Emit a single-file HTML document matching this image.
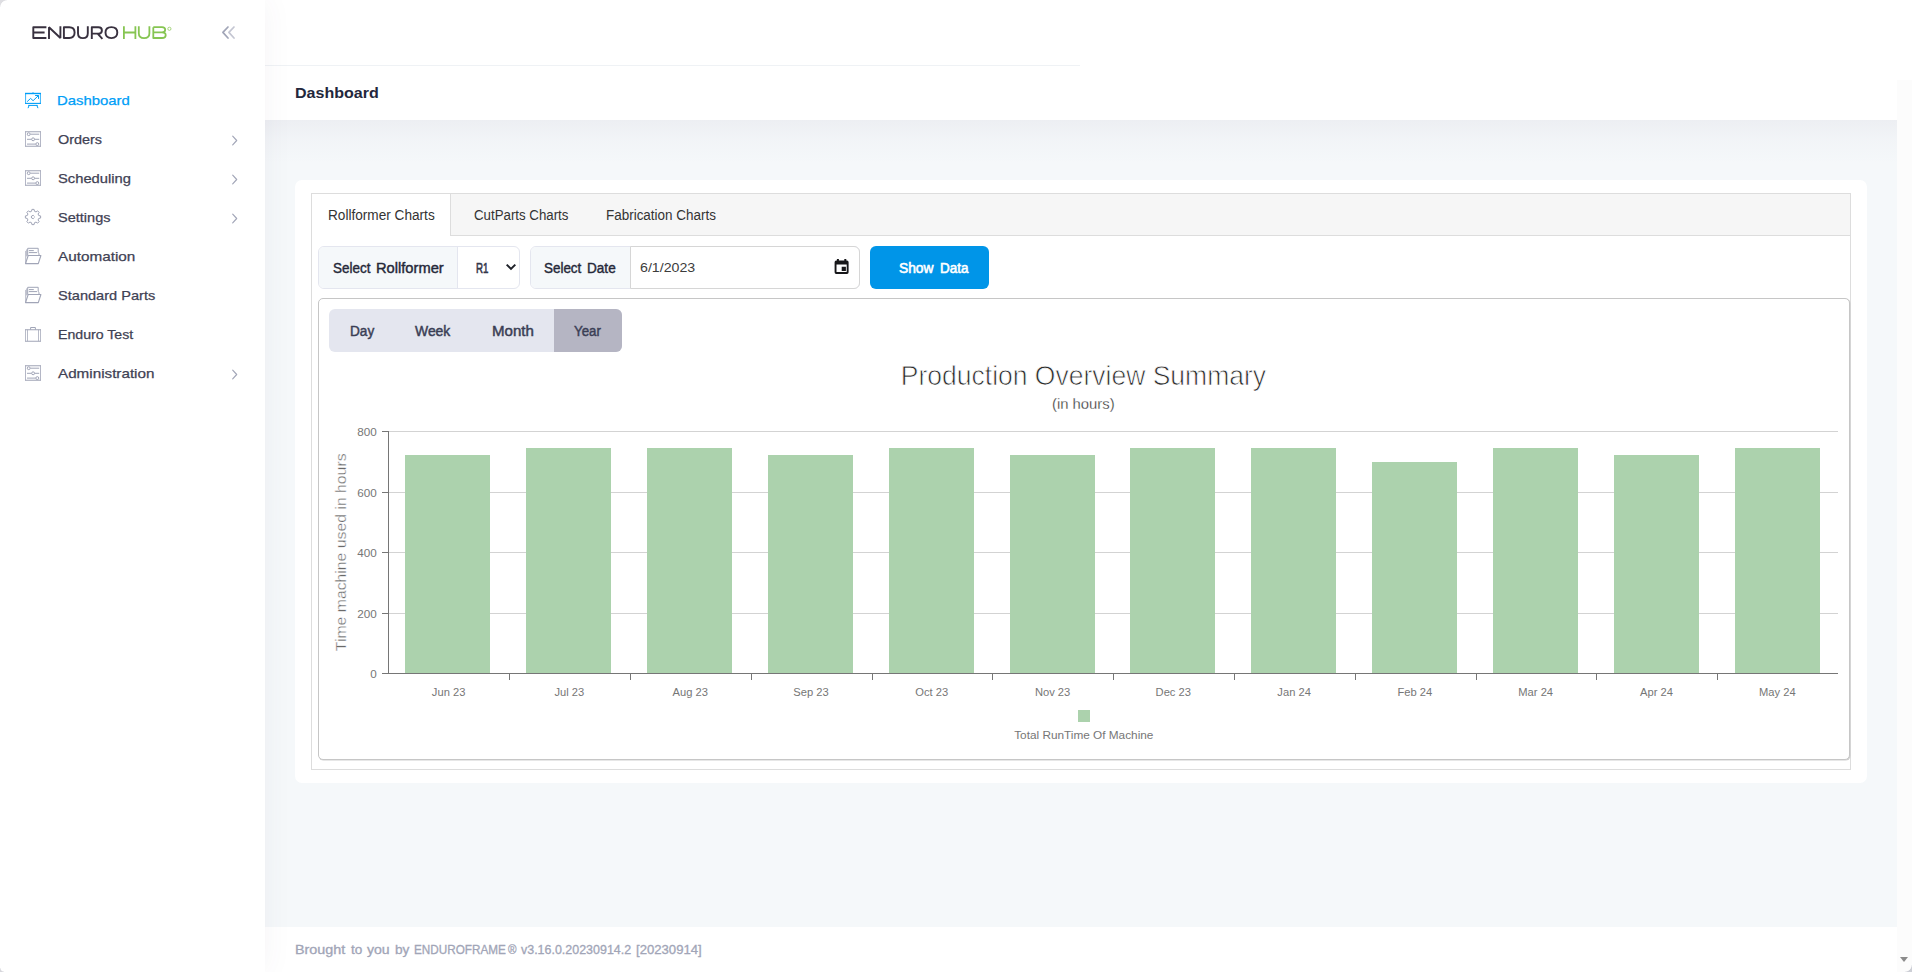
<!DOCTYPE html>
<html lang="en">
<head>
<meta charset="utf-8">
<title>Dashboard</title>
<style>
*{box-sizing:border-box;margin:0;padding:0}
html,body{width:1912px;height:972px;overflow:hidden;background:#f5f8fa;font-family:"Liberation Sans",sans-serif}
body{position:relative}
.abs{position:absolute}
.tx{position:absolute;height:30px;line-height:30px;white-space:nowrap;transform-origin:0 0;z-index:7}
/* sidebar */
#aside{position:absolute;left:0;top:0;width:265px;height:972px;background:#fff;box-shadow:0 0 28px 0 rgba(82,63,105,.06);z-index:5}
.mi{position:absolute;left:0;width:265px;height:39px}
.mi svg.ic{position:absolute;left:24px;top:11px;width:18px;height:18px;overflow:visible}
.mi svg.ch{position:absolute;left:230px;top:15.5px;width:9px;height:11px;overflow:visible}
/* header */
#header{position:absolute;left:265px;top:0;width:1647px;height:120px;background:#fff;z-index:3}
#hline{position:absolute;left:265px;top:65px;width:815px;height:1px;background:#eff2f5;z-index:4}
#hshadow{position:absolute;left:265px;top:120px;width:1632px;height:44px;background:linear-gradient(180deg,rgba(82,63,105,.05) 0%,rgba(82,63,105,.018) 45%,rgba(82,63,105,0) 100%);z-index:2}
/* card */
#card{position:absolute;left:295px;top:180px;width:1572px;height:603px;background:#fff;border-radius:7px;z-index:1}
#tabs{position:absolute;left:311px;top:193px;width:1540px;height:577px;border:1px solid #ddd;background:#fff;z-index:2}
#tabhead{position:absolute;left:0;top:0;width:1538px;height:42px;background:#f6f6f6;border-bottom:1px solid #ddd}
#tabon{position:absolute;left:0;top:0;width:138px;height:43px;background:#fff}
#tabon i{position:absolute;left:138px;top:0;width:1px;height:42px;background:#ddd}
/* input groups */
.ig{position:absolute;top:246px;height:43px;border:1px solid #e4e6ef;border-radius:6px;background:#fff;z-index:3;overflow:hidden}
.ig .lab{position:absolute;left:0;top:0;height:41px;background:#f5f8fa;border-right:1px solid #e4e6ef}
#dateinp{position:absolute;left:630px;top:246px;width:230px;height:43px;border:1px solid #d6d6d6;border-radius:0 6px 6px 0;background:#fff;z-index:4}
#btn{position:absolute;left:870px;top:246px;width:119px;height:43px;border-radius:6px;background:#0095e8;z-index:3}
/* chart panel */
#panel{position:absolute;left:318px;top:298px;width:1532px;height:462px;border:1px solid #c6c6c6;border-radius:5px;background:#fff;z-index:3;box-shadow:.6px .6px 0 0 #d0d0d0}
#bg{position:absolute;left:329px;top:309px;width:293px;height:43px;border-radius:6px;background:#e4e6ef;z-index:4;overflow:hidden}
#bg i{position:absolute;left:225px;top:0;width:68px;height:43px;background:#b5b5c3}
#chart{position:absolute;left:318px;top:298px;width:1532px;height:462px;z-index:5}
#chart text{font-family:"Liberation Sans",sans-serif}
/* footer */
#footer{position:absolute;left:265px;top:927px;width:1647px;height:45px;background:#fff;z-index:2}
/* window corners */
.cnr{position:absolute;z-index:20}
#c1{left:0;top:0;width:7px;height:7px;background:radial-gradient(circle at 7px 7px,rgba(222,222,226,0) 6.300px,#dedee2 7.100px)}
#c2{right:0;bottom:0;width:7px;height:7px;background:radial-gradient(circle at 0 0,rgba(205,207,214,0) 6.300px,#cdcfd6 7.100px)}
#c3{left:0;bottom:0;width:4px;height:4px;background:radial-gradient(circle at 4px 0,rgba(215,215,220,0) 3.2px,#d7d7dc 4px)}
/* scrollbar */
#sb{position:absolute;left:1897px;top:80px;width:15px;height:892px;background:#fcfcfc;z-index:6}
#sb i{position:absolute;left:3px;bottom:10px;width:0;height:0;border-left:4.500px solid transparent;border-right:4.500px solid transparent;border-top:5px solid #8b8b8b}
</style>
</head>
<body>

<!-- SIDEBAR -->
<div id="aside">
<svg class="abs" style="left:28px;top:20px" width="150" height="25" viewBox="28 20 150 25" fill="none" stroke-linecap="butt" stroke-linejoin="round">
<g stroke="#38313f" stroke-width="1.900">
<path d="M46.400 27.200H33.300V38H46.400M33.300 32.500H44.600"/>
<path d="M49 38.900V27.200L60.400 38V26.300" stroke-linejoin="bevel"/>
<path d="M63.900 27.200H69.200Q74.600 27.200 74.600 32.600Q74.600 38 69.200 38H63.900Z"/>
<path d="M78 26.300V33.200Q78 38.100 82.900 38.100Q87.800 38.100 87.800 33.200V26.300"/>
<path d="M91.800 38.900V27.200H98.400Q101.900 27.200 101.900 30.400Q101.900 33.600 98.400 33.600H91.800M97.600 33.600L102.400 38.900"/>
<path d="M111.400 27.100Q117.300 27.100 117.300 32.600Q117.300 38.100 111.400 38.100Q105.500 38.100 105.500 32.600Q105.500 27.100 111.400 27.100Z"/>
</g>
<g stroke="#86c552" stroke-width="1.800">
<path d="M123.900 26.300V38.900M135.400 26.300V38.900M123.900 32.500H135.400"/>
<path d="M138.800 26.300V33.200Q138.800 38.100 144.100 38.100Q149.400 38.100 149.400 33.200V26.300"/>
<path d="M153.300 27.200H162Q165.200 27.200 165.200 29.800Q165.200 32.400 162 32.400H153.300M162 32.400Q165.700 32.400 165.700 35.200Q165.700 38 162 38H153.300V27.200"/>
<circle cx="169.400" cy="28.800" r="1.600" stroke-width=".7"/>
</g>
</svg>
<svg class="abs" style="left:220px;top:24px" width="18" height="18" viewBox="220 24 18 18" fill="none" stroke-width="1.700" stroke-linecap="round" stroke-linejoin="round">
<path d="M228 27L222.900 32.400L228 38" stroke="#a1a5b7"/>
<path d="M234 27L228.900 32.400L234 38" stroke="#c4c6d2"/>
</svg>
<div class="mi" style="top:80px"><svg class="ic" viewBox="0 0 18 18" fill="none" stroke="#009ef7" stroke-width="1" stroke-linejoin="round">
<path d="M9 1.300V2.200"/><path d="M1 2.500H17" stroke-width="1.400"/><path d="M1.600 2.700V12.200M16.400 2.700V12.200" stroke-width=".8"/>
<path d="M3.400 10.400L6.600 7.400L9.100 9.700L14.300 4.700M11.500 4.500H14.500V7.500" stroke-linecap="round"/><path d="M1 12.400H17" stroke-width="1.100"/><path d="M4.700 14.400H13.200M5.100 14.400L4.200 16.800M12.900 14.400L13.800 16.800" stroke-linecap="round"/></svg></div>
<div class="mi" style="top:119px"><svg class="ic" viewBox="0 0 18 18" fill="none" stroke="#a1a5b7" stroke-width="1">
<path d="M1 1.700H17M1 16.300H17" stroke-width="1.100"/><path d="M1.500 1.700V16.300M16.500 1.700V16.300" stroke-width=".8"/>
<circle cx="4.700" cy="4.200" r="1.450"/><path d="M6.300 4.200H15.200"/>
<circle cx="9.100" cy="9.300" r="1.450"/><path d="M3 9.300H7.500M10.700 9.300H15.200"/>
<circle cx="13.300" cy="14.100" r="1.450"/><path d="M3 14.100H11.700"/></svg><svg class="ch" viewBox="0 0 9 11" fill="none" stroke="#a1a5b7" stroke-width="1.150" stroke-linecap="round" stroke-linejoin="round"><path d="M2.700 1.200L6.700 5.500L2.700 9.800"/></svg></div>
<div class="mi" style="top:158px"><svg class="ic" viewBox="0 0 18 18" fill="none" stroke="#a1a5b7" stroke-width="1">
<path d="M1 1.700H17M1 16.300H17" stroke-width="1.100"/><path d="M1.500 1.700V16.300M16.500 1.700V16.300" stroke-width=".8"/>
<circle cx="4.700" cy="4.200" r="1.450"/><path d="M6.300 4.200H15.200"/>
<circle cx="9.100" cy="9.300" r="1.450"/><path d="M3 9.300H7.500M10.700 9.300H15.200"/>
<circle cx="13.300" cy="14.100" r="1.450"/><path d="M3 14.100H11.700"/></svg><svg class="ch" viewBox="0 0 9 11" fill="none" stroke="#a1a5b7" stroke-width="1.150" stroke-linecap="round" stroke-linejoin="round"><path d="M2.700 1.200L6.700 5.500L2.700 9.800"/></svg></div>
<div class="mi" style="top:197px"><svg class="ic" viewBox="0 0 18 18" fill="none" stroke="#a1a5b7" stroke-width="1" stroke-linejoin="round"><path d="M7.93 1.38L10.07 1.38L10.46 3.28L12.01 3.93L13.63 2.85L15.15 4.37L14.07 5.99L14.72 7.54L16.62 7.93L16.62 10.07L14.72 10.46L14.07 12.01L15.15 13.63L13.63 15.15L12.01 14.07L10.46 14.72L10.07 16.62L7.93 16.62L7.54 14.72L5.99 14.07L4.37 15.15L2.85 13.63L3.93 12.01L3.28 10.46L1.38 10.07L1.38 7.93L3.28 7.54L3.93 5.99L2.85 4.37L4.37 2.85L5.99 3.93L7.54 3.28Z"/><path d="M10.300 8.200A1.600 1.600 0 1 0 10.300 9.800" stroke-linecap="round"/></svg><svg class="ch" viewBox="0 0 9 11" fill="none" stroke="#a1a5b7" stroke-width="1.150" stroke-linecap="round" stroke-linejoin="round"><path d="M2.700 1.200L6.700 5.500L2.700 9.800"/></svg></div>
<div class="mi" style="top:236px"><svg class="ic" viewBox="0 0 18 18" fill="none" stroke="#a1a5b7" stroke-width="1" stroke-linejoin="round" stroke-linecap="round">
<path d="M3.700 8.300V1.300H14.200V5.600L15 6.300V8.300"/><path d="M2.700 2.800V9M1.700 4.300V16.400" stroke-width=".8"/>
<path d="M5.300 3.600H9.400M5.300 5.600H12.600"/>
<path d="M4.200 8.500H16.900L14.300 16.600H1.500Z" stroke-width="1.100"/></svg></div>
<div class="mi" style="top:275px"><svg class="ic" viewBox="0 0 18 18" fill="none" stroke="#a1a5b7" stroke-width="1" stroke-linejoin="round" stroke-linecap="round">
<path d="M3.700 8.300V1.300H14.200V5.600L15 6.300V8.300"/><path d="M2.700 2.800V9M1.700 4.300V16.400" stroke-width=".8"/>
<path d="M5.300 3.600H9.400M5.300 5.600H12.600"/>
<path d="M4.200 8.500H16.900L14.300 16.600H1.500Z" stroke-width="1.100"/></svg></div>
<div class="mi" style="top:314px"><svg class="ic" viewBox="0 0 18 18" fill="none" stroke="#a1a5b7" stroke-width="1" stroke-linejoin="round">
<path d="M1 4.700H17M1 16.200H17" stroke-width="1.100"/><path d="M1.500 4.700V16.200M16.500 4.700V16.200" stroke-width=".75"/><path d="M6.600 4.700V2.500H11.400V4.700"/><path d="M3.500 4.700V16.200M14.500 4.700V16.200" stroke-width=".75"/></svg></div>
<div class="mi" style="top:353px"><svg class="ic" viewBox="0 0 18 18" fill="none" stroke="#a1a5b7" stroke-width="1">
<path d="M1 1.700H17M1 16.300H17" stroke-width="1.100"/><path d="M1.500 1.700V16.300M16.500 1.700V16.300" stroke-width=".8"/>
<circle cx="4.700" cy="4.200" r="1.450"/><path d="M6.300 4.200H15.200"/>
<circle cx="9.100" cy="9.300" r="1.450"/><path d="M3 9.300H7.500M10.700 9.300H15.200"/>
<circle cx="13.300" cy="14.100" r="1.450"/><path d="M3 14.100H11.700"/></svg><svg class="ch" viewBox="0 0 9 11" fill="none" stroke="#a1a5b7" stroke-width="1.150" stroke-linecap="round" stroke-linejoin="round"><path d="M2.700 1.200L6.700 5.500L2.700 9.800"/></svg></div>
</div>

<!-- HEADER -->
<div id="header"></div>
<div id="hline"></div>
<div id="hshadow"></div>

<!-- CARD -->
<div id="card"></div>
<div id="tabs">
  <div id="tabhead"><div id="tabon"><i></i></div></div>
</div>

<div class="ig" style="left:318px;width:202px"><div class="lab" style="width:139px"></div></div>
<svg class="abs" style="left:505px;top:262px;z-index:8" width="12" height="10" viewBox="0 0 12 10" fill="none" stroke="#1e2129" stroke-width="2"><path d="M1.700 2.600L6 6.900L10.300 2.600"/></svg>
<div class="ig" style="left:530px;width:330px"><div class="lab" style="width:101px"></div></div>
<div id="dateinp"></div>
<svg class="abs" style="left:834px;top:258px;z-index:8" width="16" height="17" viewBox="0 0 16 17" fill="#17171a"><path fill-rule="evenodd" d="M2.900 1h2v1.600h5.400V1h2v1.600h.7a1.600 1.600 0 0 1 1.600 1.600v10.100a1.600 1.600 0 0 1-1.600 1.600H2.200a1.600 1.600 0 0 1-1.600-1.600V4.200a1.600 1.600 0 0 1 1.600-1.600h.7zM2.500 6.400v7.700h10.200V6.400zM7.700 8.800h4.200v4.300H7.700z"/></svg>
<div id="btn"></div>

<div id="panel"></div>
<div id="bg"><i></i></div>

<svg id="chart" width="1532" height="462" viewBox="318 298 1532 462">
<text x="1083.45" y="384.6" text-anchor="middle" font-size="27.2" fill="#2b2b2b" textLength="365.3" lengthAdjust="spacingAndGlyphs" stroke="#fff" stroke-width=".75">Production Overview Summary</text>
<text x="1083.3" y="408.6" text-anchor="middle" font-size="15.4" fill="#2b2b2b" textLength="62.6" lengthAdjust="spacingAndGlyphs" stroke="#fff" stroke-width=".3">(in hours)</text>
<path d="M382.0 673.5H388.5" stroke="#767676" stroke-width="1" shape-rendering="crispEdges"/>
<text x="376.800" y="677.8" text-anchor="end" font-size="11.700" fill="#767676">0</text>
<path d="M389.0 613.5H1838.0" stroke="#d3d3d3" stroke-width="1" shape-rendering="crispEdges"/>
<path d="M382.0 613.5H388.5" stroke="#767676" stroke-width="1" shape-rendering="crispEdges"/>
<text x="376.800" y="617.8" text-anchor="end" font-size="11.700" fill="#767676">200</text>
<path d="M389.0 552.5H1838.0" stroke="#d3d3d3" stroke-width="1" shape-rendering="crispEdges"/>
<path d="M382.0 552.5H388.5" stroke="#767676" stroke-width="1" shape-rendering="crispEdges"/>
<text x="376.800" y="556.8" text-anchor="end" font-size="11.700" fill="#767676">400</text>
<path d="M389.0 492.5H1838.0" stroke="#d3d3d3" stroke-width="1" shape-rendering="crispEdges"/>
<path d="M382.0 492.5H388.5" stroke="#767676" stroke-width="1" shape-rendering="crispEdges"/>
<text x="376.800" y="496.8" text-anchor="end" font-size="11.700" fill="#767676">600</text>
<path d="M389.0 431.5H1838.0" stroke="#d3d3d3" stroke-width="1" shape-rendering="crispEdges"/>
<path d="M382.0 431.5H388.5" stroke="#767676" stroke-width="1" shape-rendering="crispEdges"/>
<text x="376.800" y="435.8" text-anchor="end" font-size="11.700" fill="#767676">800</text>
<rect x="405" y="455" width="85" height="218" fill="#acd2ad" shape-rendering="crispEdges"/>
<text x="448.6" y="696.400" text-anchor="middle" font-size="11.700" fill="#767676" textLength="33.5" lengthAdjust="spacingAndGlyphs">Jun 23</text>
<rect x="526" y="448" width="85" height="225" fill="#acd2ad" shape-rendering="crispEdges"/>
<text x="569.4" y="696.400" text-anchor="middle" font-size="11.700" fill="#767676" textLength="29.8" lengthAdjust="spacingAndGlyphs">Jul 23</text>
<path d="M509.5 673.5V680.0" stroke="#767676" stroke-width="1" shape-rendering="crispEdges"/>
<rect x="647" y="448" width="85" height="225" fill="#acd2ad" shape-rendering="crispEdges"/>
<text x="690.2" y="696.400" text-anchor="middle" font-size="11.700" fill="#767676" textLength="35.4" lengthAdjust="spacingAndGlyphs">Aug 23</text>
<path d="M630.5 673.5V680.0" stroke="#767676" stroke-width="1" shape-rendering="crispEdges"/>
<rect x="768" y="455" width="85" height="218" fill="#acd2ad" shape-rendering="crispEdges"/>
<text x="811.0" y="696.400" text-anchor="middle" font-size="11.700" fill="#767676" textLength="35.4" lengthAdjust="spacingAndGlyphs">Sep 23</text>
<path d="M751.5 673.5V680.0" stroke="#767676" stroke-width="1" shape-rendering="crispEdges"/>
<rect x="889" y="448" width="85" height="225" fill="#acd2ad" shape-rendering="crispEdges"/>
<text x="931.8" y="696.400" text-anchor="middle" font-size="11.700" fill="#767676" textLength="32.9" lengthAdjust="spacingAndGlyphs">Oct 23</text>
<path d="M872.5 673.5V680.0" stroke="#767676" stroke-width="1" shape-rendering="crispEdges"/>
<rect x="1010" y="455" width="85" height="218" fill="#acd2ad" shape-rendering="crispEdges"/>
<text x="1052.6" y="696.400" text-anchor="middle" font-size="11.700" fill="#767676" textLength="35.4" lengthAdjust="spacingAndGlyphs">Nov 23</text>
<path d="M992.5 673.5V680.0" stroke="#767676" stroke-width="1" shape-rendering="crispEdges"/>
<rect x="1130" y="448" width="85" height="225" fill="#acd2ad" shape-rendering="crispEdges"/>
<text x="1173.3" y="696.400" text-anchor="middle" font-size="11.700" fill="#767676" textLength="35.4" lengthAdjust="spacingAndGlyphs">Dec 23</text>
<path d="M1113.5 673.5V680.0" stroke="#767676" stroke-width="1" shape-rendering="crispEdges"/>
<rect x="1251" y="448" width="85" height="225" fill="#acd2ad" shape-rendering="crispEdges"/>
<text x="1294.1" y="696.400" text-anchor="middle" font-size="11.700" fill="#767676" textLength="33.5" lengthAdjust="spacingAndGlyphs">Jan 24</text>
<path d="M1234.5 673.5V680.0" stroke="#767676" stroke-width="1" shape-rendering="crispEdges"/>
<rect x="1372" y="462" width="85" height="211" fill="#acd2ad" shape-rendering="crispEdges"/>
<text x="1414.9" y="696.400" text-anchor="middle" font-size="11.700" fill="#767676" textLength="34.8" lengthAdjust="spacingAndGlyphs">Feb 24</text>
<path d="M1355.5 673.5V680.0" stroke="#767676" stroke-width="1" shape-rendering="crispEdges"/>
<rect x="1493" y="448" width="85" height="225" fill="#acd2ad" shape-rendering="crispEdges"/>
<text x="1535.7" y="696.400" text-anchor="middle" font-size="11.700" fill="#767676" textLength="34.8" lengthAdjust="spacingAndGlyphs">Mar 24</text>
<path d="M1476.5 673.5V680.0" stroke="#767676" stroke-width="1" shape-rendering="crispEdges"/>
<rect x="1614" y="455" width="85" height="218" fill="#acd2ad" shape-rendering="crispEdges"/>
<text x="1656.5" y="696.400" text-anchor="middle" font-size="11.700" fill="#767676" textLength="32.9" lengthAdjust="spacingAndGlyphs">Apr 24</text>
<path d="M1596.5 673.5V680.0" stroke="#767676" stroke-width="1" shape-rendering="crispEdges"/>
<rect x="1735" y="448" width="85" height="225" fill="#acd2ad" shape-rendering="crispEdges"/>
<text x="1777.3" y="696.400" text-anchor="middle" font-size="11.700" fill="#767676" textLength="36.6" lengthAdjust="spacingAndGlyphs">May 24</text>
<path d="M1717.5 673.5V680.0" stroke="#767676" stroke-width="1" shape-rendering="crispEdges"/>
<path d="M388.5 431.0V673.5H1838.0" fill="none" stroke="#767676" stroke-width="1" shape-rendering="crispEdges"/>
<text transform="translate(345.800,552.300) rotate(-90)" text-anchor="middle" font-size="15.400" fill="#6a6a6a" textLength="197.700" lengthAdjust="spacingAndGlyphs" stroke="#fff" stroke-width=".35">Time machine used in hours</text>
<rect x="1078" y="710" width="12" height="12" fill="#acd2ad" shape-rendering="crispEdges"/>
<text x="1083.8" y="738.7" text-anchor="middle" font-size="11.8" fill="#767676" textLength="139.2" lengthAdjust="spacingAndGlyphs">Total RunTime Of Machine</text>
</svg>

<!-- FOOTER -->
<div id="footer"></div>
<div id="sb"><i></i></div>

<div class="cnr" id="c1"></div><div class="cnr" id="c2"></div><div class="cnr" id="c3"></div>

<!-- TEXT -->
<span class="tx" style="left:57.23px;top:86px;font-size:12.8px;color:#009ef7;transform:scaleX(1.1634);-webkit-text-stroke:.25px #009ef7;">Dashboard</span>
<span class="tx" style="left:57.53px;top:125px;font-size:12.8px;color:#3f4254;transform:scaleX(1.1261);-webkit-text-stroke:.25px #3f4254;">Orders</span>
<span class="tx" style="left:57.53px;top:164px;font-size:12.8px;color:#3f4254;transform:scaleX(1.1518);-webkit-text-stroke:.25px #3f4254;">Scheduling</span>
<span class="tx" style="left:57.53px;top:203px;font-size:12.8px;color:#3f4254;transform:scaleX(1.1363);-webkit-text-stroke:.25px #3f4254;">Settings</span>
<span class="tx" style="left:57.62px;top:242px;font-size:12.8px;color:#3f4254;transform:scaleX(1.1945);-webkit-text-stroke:.25px #3f4254;">Automation</span>
<span class="tx" style="left:57.62px;top:281px;font-size:12.8px;color:#3f4254;transform:scaleX(1.1391);-webkit-text-stroke:.25px #3f4254;">Standard Parts</span>
<span class="tx" style="left:57.93px;top:320px;font-size:12.8px;color:#3f4254;transform:scaleX(1.1055);-webkit-text-stroke:.25px #3f4254;">Enduro Test</span>
<span class="tx" style="left:57.62px;top:359px;font-size:12.8px;color:#3f4254;transform:scaleX(1.1893);-webkit-text-stroke:.25px #3f4254;">Administration</span>
<span class="tx" style="left:295.20px;top:78px;font-size:14.4px;color:#23273c;transform:scaleX(1.1142);font-weight:bold;">Dashboard</span>
<span class="tx" style="left:328.00px;top:200px;font-size:14px;color:#333;transform:scaleX(0.9727);">Rollformer Charts</span>
<span class="tx" style="left:474.10px;top:200px;font-size:14px;color:#333;transform:scaleX(0.9480);">CutParts Charts</span>
<span class="tx" style="left:606.40px;top:200px;font-size:14px;color:#333;transform:scaleX(0.9608);">Fabrication Charts</span>
<span class="tx" style="left:332.80px;top:253px;font-size:14px;color:#252839;transform:scaleX(0.9613);-webkit-text-stroke:.4px #252839;">Select</span>
<span class="tx" style="left:375.80px;top:253px;font-size:14px;color:#252839;transform:scaleX(1.0485);-webkit-text-stroke:.4px #252839;">Rollformer</span>
<span class="tx" style="left:476.00px;top:253px;font-size:14px;color:#34374a;transform:scaleX(0.6930);-webkit-text-stroke:.6px #34374a;">R1</span>
<span class="tx" style="left:544.30px;top:253px;font-size:14px;color:#252839;transform:scaleX(0.9587);-webkit-text-stroke:.4px #252839;">Select</span>
<span class="tx" style="left:587.20px;top:253px;font-size:14px;color:#252839;transform:scaleX(0.9706);-webkit-text-stroke:.4px #252839;">Date</span>
<span class="tx" style="left:639.90px;top:253px;font-size:13.5px;color:#3c3c3c;transform:scaleX(1.0503);">6/1/2023</span>
<span class="tx" style="left:899.25px;top:253px;font-size:14px;color:#fff;transform:scaleX(0.9841);-webkit-text-stroke:.6px #fff;">Show</span>
<span class="tx" style="left:939.50px;top:253px;font-size:14px;color:#fff;transform:scaleX(0.9600);-webkit-text-stroke:.6px #fff;">Data</span>
<span class="tx" style="left:349.83px;top:316px;font-size:14px;color:#3a3e55;transform:scaleX(0.9742);-webkit-text-stroke:.45px #3a3e55;">Day</span>
<span class="tx" style="left:415.12px;top:316px;font-size:14px;color:#3a3e55;transform:scaleX(0.9941);-webkit-text-stroke:.45px #3a3e55;">Week</span>
<span class="tx" style="left:491.62px;top:316px;font-size:14px;color:#3a3e55;transform:scaleX(1.0757);-webkit-text-stroke:.45px #3a3e55;">Month</span>
<span class="tx" style="left:574.43px;top:316px;font-size:14px;color:#3a3e55;transform:scaleX(0.9490);-webkit-text-stroke:.45px #3a3e55;">Year</span>
<span class="tx" style="left:295.45px;top:935px;font-size:12.4px;color:#a1a5b7;transform:scaleX(1.1583);-webkit-text-stroke:.3px #a1a5b7;">Brought</span>
<span class="tx" style="left:351.05px;top:935px;font-size:12.4px;color:#a1a5b7;transform:scaleX(1.0927);-webkit-text-stroke:.3px #a1a5b7;">to</span>
<span class="tx" style="left:366.95px;top:935px;font-size:12.4px;color:#a1a5b7;transform:scaleX(1.1356);-webkit-text-stroke:.3px #a1a5b7;">you</span>
<span class="tx" style="left:395.35px;top:935px;font-size:12.4px;color:#a1a5b7;transform:scaleX(1.0997);-webkit-text-stroke:.3px #a1a5b7;">by</span>
<span class="tx" style="left:414.45px;top:935px;font-size:12.4px;color:#a1a5b7;transform:scaleX(0.9460);-webkit-text-stroke:.3px #a1a5b7;">ENDUROFRAME</span>
<span class="tx" style="left:507.95px;top:935px;font-size:12.4px;color:#a1a5b7;transform:scaleX(0.9301);-webkit-text-stroke:.3px #a1a5b7;">®</span>
<span class="tx" style="left:520.85px;top:935px;font-size:12.4px;color:#a1a5b7;transform:scaleX(1.0052);-webkit-text-stroke:.3px #a1a5b7;">v3.16.0.20230914.2</span>
<span class="tx" style="left:636.35px;top:935px;font-size:12.4px;color:#a1a5b7;transform:scaleX(1.0602);-webkit-text-stroke:.3px #a1a5b7;">[20230914]</span>

</body>
</html>
